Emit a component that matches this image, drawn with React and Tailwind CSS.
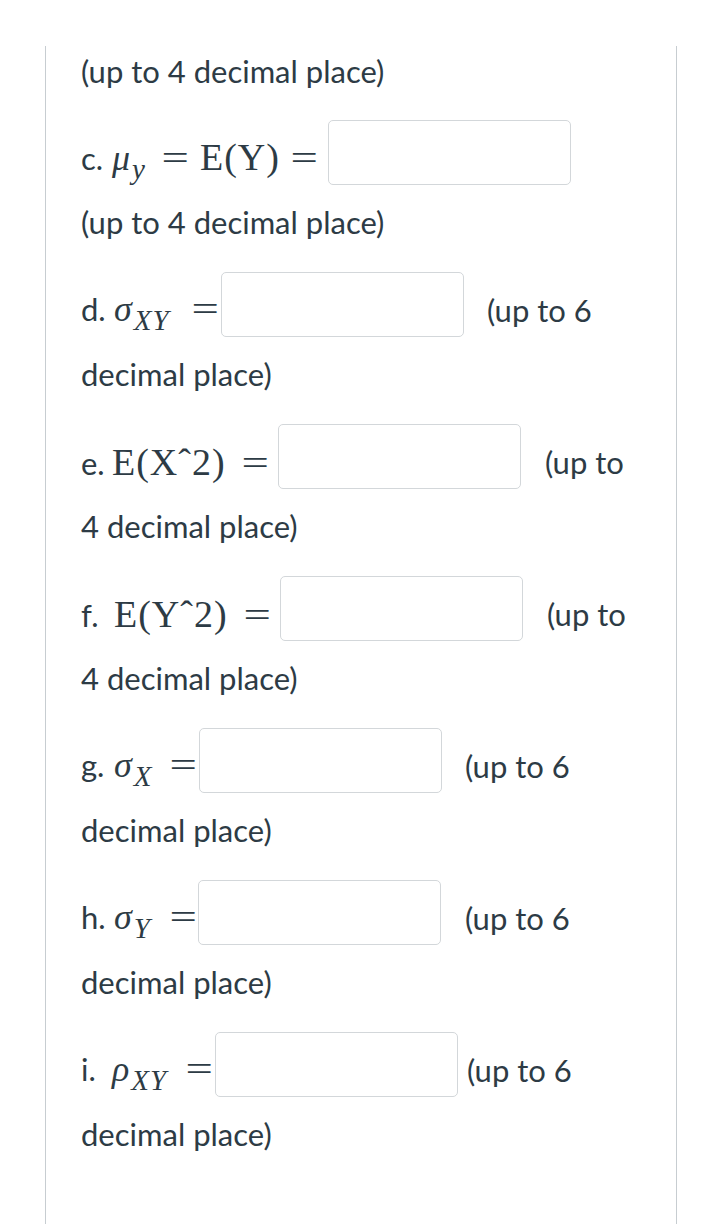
import React from 'react';

const text = "font-['Lato','Liberation_Sans',sans-serif] text-[31px] text-[#2d3b45]";
const serif = "font-['Liberation_Serif',serif] text-[#2d3b45]";

const Input = ({ className = '' }) => (
  <input
    type="text"
    className={`h-[65px] w-[243px] shrink-0 rounded-[5px] border border-[#d3d7da] bg-white outline-none ${className}`}
  />
);

const Eq = ({ className = '' }) => (
  <span className={`${serif} inline-block w-[25px] shrink-0 text-center text-[36px] ${className}`}>
    <span className="inline-block scale-x-[1.35]">=</span>
  </span>
);

const Sym = ({ children, sub, className = '' }) => (
  <span className={`${serif} shrink-0 text-[36px] italic ${className}`}>
    {children}
    {sub && <span className="relative top-[9px] ml-[2px] text-[29px] tracking-[1px] italic">{sub}</span>}
  </span>
);

const Expr = ({ children, className = '' }) => (
  <span className={`${serif} shrink-0 text-[38px] tracking-[1px] ${className}`}>{children}</span>
);

const Label = ({ children, className = '' }) => (
  <span className={`${text} shrink-0 ${className}`}>{children}</span>
);

const Row = ({ children, input, after, afterClass, wrap }) => (
  <>
    <div className="flex h-[65px] items-center">
      <div className="flex items-baseline pt-[11px] leading-[40px]">{children}</div>
      <Input className={input} />
      {after && <span className={`${text} pt-[11px] leading-[40px] ${afterClass}`}>{after}</span>}
    </div>
    <p className={`${text} mb-[30px] mt-[17px] leading-[40px]`}>{wrap}</p>
  </>
);

export default function App() {
  return (
    <div className="min-h-[1224px] bg-white pt-[46px]">
      <div className="ml-[45px] min-h-[1178px] w-[632px] border-x border-[#c7cdd1] pl-[35px] pt-[5px]">
        <p className={`${text} mb-[29px] leading-[40px]`}>(up to 4 decimal place)</p>

        <Row input="ml-[11px]" wrap="(up to 4 decimal place)">
          <Label className="w-[31px]">c.</Label>
          <Sym sub="y" className="w-[51px]">μ</Sym>
          <Eq />
          <Expr className="ml-[12px] w-[80px]">E(Y)</Expr>
          <Eq className="ml-[12px]" />
        </Row>

        <Row input="ml-[3px]" after="(up to 6" afterClass="ml-[23px]" wrap="decimal place)">
          <Label className="w-[33px]">d.</Label>
          <Sym sub="XY" className="w-[79px]">σ</Sym>
          <Eq />
        </Row>

        <Row input="ml-[10px]" after="(up to" afterClass="ml-[24px]" wrap="4 decimal place)">
          <Label className="w-[31px]">e.</Label>
          <Expr className="w-[131px]">E(Xˆ2)</Expr>
          <Eq />
        </Row>

        <Row input="ml-[10px]" after="(up to" afterClass="ml-[24px]" wrap="4 decimal place)">
          <Label className="w-[33px]">f.</Label>
          <Expr className="w-[131px]">E(Yˆ2)</Expr>
          <Eq />
        </Row>

        <Row input="ml-[3px]" after="(up to 6" afterClass="ml-[23px]" wrap="decimal place)">
          <Label className="w-[33px]">g.</Label>
          <Sym sub="X" className="w-[57px]">σ</Sym>
          <Eq />
        </Row>

        <Row input="ml-[2px]" after="(up to 6" afterClass="ml-[24px]" wrap="decimal place)">
          <Label className="w-[33px]">h.</Label>
          <Sym sub="Y" className="w-[57px]">σ</Sym>
          <Eq />
        </Row>

        <Row input="ml-[3px]" after="(up to 6" afterClass="ml-[9px]" wrap="decimal place)">
          <Label className="w-[31px]">i.</Label>
          <Sym sub="XY" className="w-[75px]">ρ</Sym>
          <Eq />
        </Row>
      </div>
    </div>
  );
}
